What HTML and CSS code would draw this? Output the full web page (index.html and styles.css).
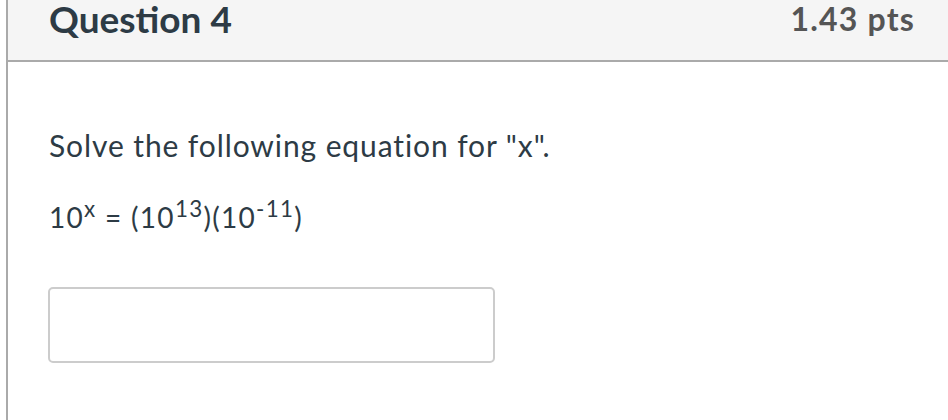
FILE: index.html
```html
<!DOCTYPE html>
<html>
<head>
<meta charset="utf-8">
<link rel="stylesheet" href="styles.css">
</head>
<body>
<div class="question">
  <div class="header">
    <span class="title">Question 4</span>
    <span class="pts">1.43 pts</span>
  </div>
  <div class="content">
    <p class="text">Solve the following equation for "x".</p>
    <p class="eq">10<sup>x</sup> = (10<sup>13</sup>)(10<sup>-11</sup>)</p>
    <input class="answer" type="text">
  </div>
</div>
</body>
</html>
```
FILE: styles.css
```css
html, body {
  margin: 0;
  padding: 0;
  background: #fff;
}
body {
  font-family: Lato, "Open Sans", sans-serif;
  color: #2d3b45;
}
.question {
  margin-left: 6px;
  border-left: 2px solid #aaaaaa;
  height: 420px;
}
.header {
  height: 60px;
  background: #f5f5f5;
  border-bottom: 2px solid #aaaaaa;
  display: flex;
  justify-content: space-between;
  align-items: flex-end;
  padding: 0 33px 0 41px;
}
.title {
  font-weight: 700;
  font-size: 37px;
  line-height: 38px;
  margin-bottom: 22px;
}
.pts {
  font-weight: 700;
  font-size: 32px;
  letter-spacing: 1.2px;
  color: #555555;
  line-height: 38px;
  margin-bottom: 22px;
}
.content {
  padding: 0 0 0 40px;
}
.text {
  font-size: 30px;
  letter-spacing: 0.9px;
  margin: 63px 0 0 1px;
  line-height: 40px;
}
.eq {
  font-size: 28px;
  letter-spacing: 1.3px;
  margin: 32px 0 0 1px;
  line-height: 40px;
}
.eq sup {
  font-size: 80%;
  line-height: 0;
  vertical-align: 0.5em;
}
.answer {
  display: block;
  margin-top: 50px;
  width: 447px;
  height: 76px;
  box-sizing: border-box;
  border: 2px solid #cccccc;
  border-radius: 5px;
  background: #fff;
  outline: none;
  padding: 0;
}
```
